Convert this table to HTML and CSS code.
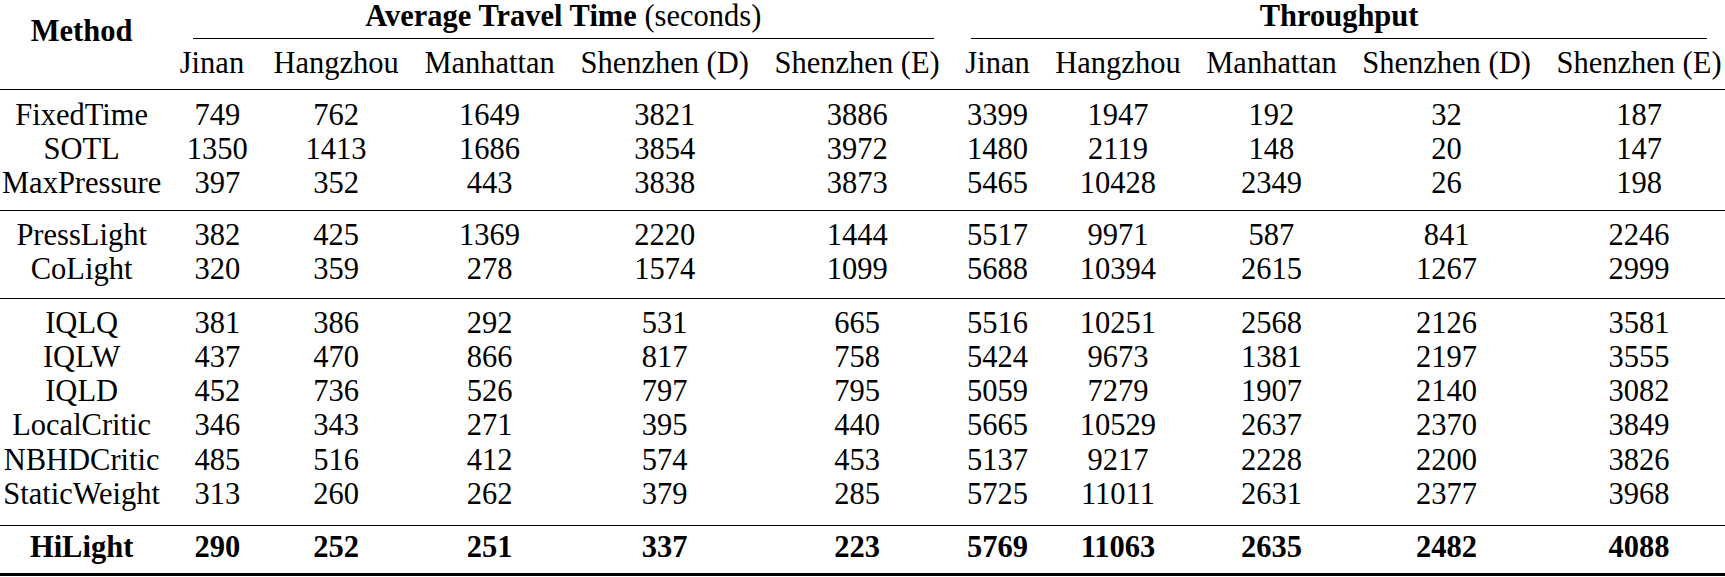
FILE: index.html
```html
<!DOCTYPE html>
<html lang="en">

<head>
	<meta charset="UTF-8">
	<meta name="viewport" content="width=device-width, initial-scale=1.0">
	<title>Travel time and throughput by method</title>
	<link rel="stylesheet" href="styles.css">
</head>

<body>
	<table class="results">
		<thead>
			<tr class="groups">
				<th rowspan="2" class="methodHead">Method</th>
				<th colspan="5" class="group">
					<div class="groupTitle"><b>Average Travel Time</b> (seconds)</div>
				</th>
				<th colspan="5" class="group">
					<div class="groupTitle"><b>Throughput</b></div>
				</th>
			</tr>
			<tr class="cities">
				<th>Jinan</th>
				<th>Hangzhou</th>
				<th>Manhattan</th>
				<th>Shenzhen (D)</th>
				<th>Shenzhen (E)</th>
				<th>Jinan</th>
				<th>Hangzhou</th>
				<th>Manhattan</th>
				<th>Shenzhen (D)</th>
				<th>Shenzhen (E)</th>
			</tr>
		</thead>
		<tbody class="classic">
			<tr><td>FixedTime</td><td>749</td><td>762</td><td>1649</td><td>3821</td><td>3886</td><td>3399</td><td>1947</td><td>192</td><td>32</td><td>187</td></tr>
			<tr><td>SOTL</td><td>1350</td><td>1413</td><td>1686</td><td>3854</td><td>3972</td><td>1480</td><td>2119</td><td>148</td><td>20</td><td>147</td></tr>
			<tr><td>MaxPressure</td><td>397</td><td>352</td><td>443</td><td>3838</td><td>3873</td><td>5465</td><td>10428</td><td>2349</td><td>26</td><td>198</td></tr>
		</tbody>
		<tbody class="learned">
			<tr><td>PressLight</td><td>382</td><td>425</td><td>1369</td><td>2220</td><td>1444</td><td>5517</td><td>9971</td><td>587</td><td>841</td><td>2246</td></tr>
			<tr><td>CoLight</td><td>320</td><td>359</td><td>278</td><td>1574</td><td>1099</td><td>5688</td><td>10394</td><td>2615</td><td>1267</td><td>2999</td></tr>
		</tbody>
		<tbody class="ablation">
			<tr><td>IQLQ</td><td>381</td><td>386</td><td>292</td><td>531</td><td>665</td><td>5516</td><td>10251</td><td>2568</td><td>2126</td><td>3581</td></tr>
			<tr><td>IQLW</td><td>437</td><td>470</td><td>866</td><td>817</td><td>758</td><td>5424</td><td>9673</td><td>1381</td><td>2197</td><td>3555</td></tr>
			<tr><td>IQLD</td><td>452</td><td>736</td><td>526</td><td>797</td><td>795</td><td>5059</td><td>7279</td><td>1907</td><td>2140</td><td>3082</td></tr>
			<tr><td>LocalCritic</td><td>346</td><td>343</td><td>271</td><td>395</td><td>440</td><td>5665</td><td>10529</td><td>2637</td><td>2370</td><td>3849</td></tr>
			<tr><td>NBHDCritic</td><td>485</td><td>516</td><td>412</td><td>574</td><td>453</td><td>5137</td><td>9217</td><td>2228</td><td>2200</td><td>3826</td></tr>
			<tr><td>StaticWeight</td><td>313</td><td>260</td><td>262</td><td>379</td><td>285</td><td>5725</td><td>11011</td><td>2631</td><td>2377</td><td>3968</td></tr>
		</tbody>
		<tbody class="ours">
			<tr><td>HiLight</td><td>290</td><td>252</td><td>251</td><td>337</td><td>223</td><td>5769</td><td>11063</td><td>2635</td><td>2482</td><td>4088</td></tr>
		</tbody>
	</table>
</body>

</html>
```

FILE: styles.css
```css
body,
html {
	margin: 0;
	padding: 0;
	background-color: #fff;
}

.results {
	border-collapse: collapse;
	font-family: "Liberation Serif", "Times New Roman", serif;
	font-size: 30.5px;
	line-height: 34.2px;
	color: #000;
	white-space: nowrap;
}

.results th,
.results td {
	padding: 0 12.8px;
	text-align: center;
	vertical-align: top;
}

.results th {
	font-weight: normal;
}

.results tr > :first-child {
	padding-left: 2px;
}

.results tr > :last-child {
	padding-right: 4px;
}

.results .methodHead {
	font-weight: bold;
	padding-top: 14px;
}

.results .group {
	line-height: 32px;
}

.results .groups > .group:last-child {
	padding-right: 12.8px;
}

.groupTitle {
	margin: 0 6px;
	padding-bottom: 6px;
	border-bottom: 1.3px solid #000;
}

.results .cities th {
	padding-top: 7px;
	padding-bottom: 9px;
}

.results tbody {
	border-top: 1.8px solid #000;
}

.results tbody tr:first-child td {
	padding-top: 6.5px;
}

.results tbody tr:last-child td {
	padding-bottom: 10px;
}

.results .classic tr:first-child td {
	padding-top: 7.5px;
}

.results .learned tr:last-child td {
	padding-bottom: 12px;
}

.results .ablation tr:last-child td {
	padding-bottom: 13.6px;
}

.results .ours {
	font-weight: bold;
	border-bottom: 3.4px solid #000;
}

.results .ours tr:first-child td {
	padding-top: 4.3px;
	padding-bottom: 8.8px;
}
```
